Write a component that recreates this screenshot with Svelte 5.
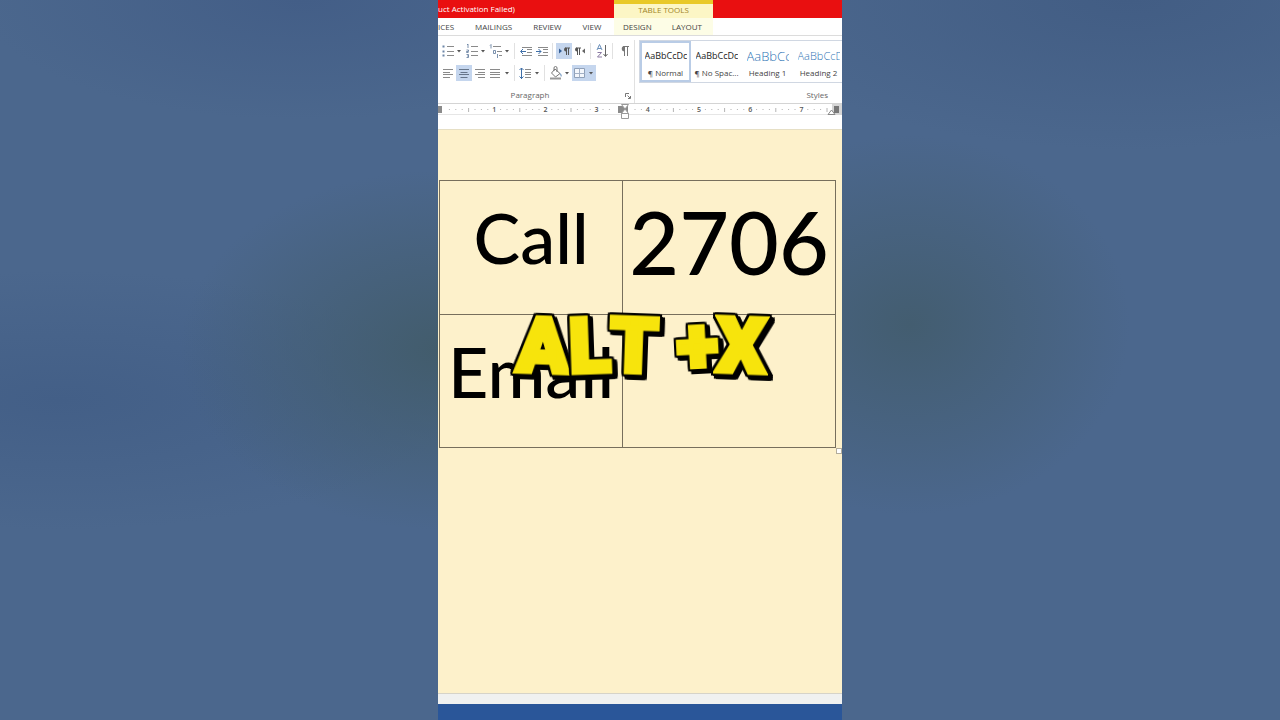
<script lang="ts">
	const tabs = ['ICES', 'MAILINGS', 'REVIEW', 'VIEW'];
	const toolTabs = ['DESIGN', 'LAYOUT'];

	type Tool = { id: string; label: string; menu?: boolean; on?: boolean };

	const rows: Tool[][][] = [
		[
			[
				{ id: 'bullets', label: 'Bullets', menu: true },
				{ id: 'numbers', label: 'Numbering', menu: true },
				{ id: 'levels', label: 'Multilevel list', menu: true }
			],
			[
				{ id: 'outdent', label: 'Decrease indent' },
				{ id: 'indent', label: 'Increase indent' }
			],
			[
				{ id: 'ltr', label: 'Left-to-right', on: true },
				{ id: 'rtl', label: 'Right-to-left' }
			],
			[{ id: 'sort', label: 'Sort' }],
			[{ id: 'marks', label: 'Show marks' }]
		],
		[
			[
				{ id: 'left', label: 'Align left' },
				{ id: 'center', label: 'Center', on: true },
				{ id: 'right', label: 'Align right' },
				{ id: 'justify', label: 'Justify', menu: true }
			],
			[{ id: 'spacing', label: 'Line spacing', menu: true }],
			[
				{ id: 'shading', label: 'Shading', menu: true },
				{ id: 'borders', label: 'Borders', menu: true, on: true }
			]
		]
	];

	const styles = [
		{ sample: 'AaBbCcDc', name: '¶ Normal', kind: 'body', on: true },
		{ sample: 'AaBbCcDc', name: '¶ No Spac...', kind: 'body', on: false },
		{ sample: 'AaBbCc', name: 'Heading 1', kind: 'h1', on: false },
		{ sample: 'AaBbCcD', name: 'Heading 2', kind: 'h2', on: false }
	];

	const caption = [
		{ char: 'A', tilt: 2 },
		{ char: 'L', tilt: -2 },
		{ char: 'T', tilt: 2 },
		{ char: ' ', tilt: 0 },
		{ char: '+', tilt: -3 },
		{ char: 'X', tilt: 2 }
	];

	const inch = 51.2;
	const inches = [1, 2, 3, 4, 5, 6, 7];
	const ticks = Array.from({ length: 62 }, (_, i) => i + 1).filter((i) => i % 8 !== 0);
</script>

<main>
	<section class="screen">
		<header class="titlebar">
			<span class="title">uct Activation Failed)</span>
			<span class="context-title">TABLE TOOLS</span>
		</header>

		<nav class="tabs">
			<div class="main-tabs">
				{#each tabs as tab}
					<a href="#{tab.toLowerCase()}">{tab}</a>
				{/each}
			</div>
			<div class="context-tabs">
				{#each toolTabs as tab}
					<a href="#{tab.toLowerCase()}">{tab}</a>
				{/each}
			</div>
		</nav>

		<div class="ribbon">
			<div class="group paragraph">
				{#each rows as row}
					<div class="tools">
						{#each row as set}
							<div class="set">
								{#each set as tool}
									<button type="button" class:on={tool.on} aria-label={tool.label}>
										<svg width="16" height="16" viewBox="0 0 16 16" fill="none" stroke="#8a8a8a">
											{#if tool.id === 'bullets'}
												<path d="M7 3.5h7M7 8.5h7M7 12.5h7" />
												<path d="M2.500 3.500h2M2.500 8.500h2M2.500 12.500h2" stroke="#6d86a8" stroke-width="2" />
											{:else if tool.id === 'numbers'}
												<path d="M7 3.500h7M7 8.500h7M7 12.500h7" />
												<path d="M3 2l1-1v4M2.500 7h2v1.500h-2v1h2M2.500 11.500h2v3h-2M3 13h1.500" stroke="#5b7699" stroke-width=".8" />
											{:else if tool.id === 'levels'}
												<path d="M5 3.500h8M9 8.500h5M11 12.500h3" />
												<path d="M2 2.500l1-1v4M5.500 7.500h2v3h-2zM9.500 11v4" stroke="#5b7699" stroke-width=".8" />
											{:else if tool.id === 'outdent' || tool.id === 'indent'}
												<path d="M4 4.500h10M9 6.500h5M9 9.500h5M4 12.500h10" />
												{#if tool.id === 'outdent'}
													<path d="M8 8.500H3M5 6L2.500 8.500 5 11" stroke="#3f6fa8" />
												{:else}
													<path d="M2 8.500h5M4.500 6L7 8.500 4.500 11" stroke="#3f6fa8" />
												{/if}
											{:else if tool.id === 'ltr'}
												<path d="M3 5.500v5l3-2.500z" fill="#345f96" stroke="none" />
												<path d="M10.500 5v7M12.500 5v7M9 5h5" stroke="#555" />
												<path d="M10 4.500a2 2 0 0 0 0 4z" fill="#555" stroke="none" />
											{:else if tool.id === 'rtl'}
												<path d="M13 5.500v5l-3-2.500z" fill="#666" stroke="none" />
												<path d="M5.500 5v7M7.500 5v7M4 5h5" stroke="#555" />
												<path d="M5 4.500a2 2 0 0 0 0 4z" fill="#555" stroke="none" />
											{:else if tool.id === 'sort'}
												<path d="M3 7l2.500-5.500L8 7M4 5.500h3" stroke="#6a8fba" />
												<path d="M3.500 9.500h4l-4 4.500h4.500" stroke="#8b7aa3" />
												<path d="M11.500 2v11M9.500 11l2 2.500 2-2.500" stroke="#666" />
											{:else if tool.id === 'marks'}
												<path d="M8.500 3v10M11.500 3v10M7 3.500h6" stroke="#777" />
												<path d="M8.500 3a2.500 2.500 0 0 0 0 5.500z" fill="#777" stroke="none" />
											{:else if tool.id === 'left'}
												<path d="M3 4.500h10M3 7.500h7M3 9.500h10M3 12.500h7" />
											{:else if tool.id === 'center'}
												<path d="M3 4.500h10M4.500 7.500h7M3 9.500h10M4.500 12.500h7" stroke="#66758a" />
											{:else if tool.id === 'right'}
												<path d="M3 4.500h10M6 7.500h7M3 9.500h10M6 12.500h7" />
											{:else if tool.id === 'justify'}
												<path d="M2 4.500h10M2 7.500h10M2 9.500h10M2 12.500h10" />
											{:else if tool.id === 'spacing'}
												<path d="M7 4.500h6M7 7.500h6M7 9.500h6M7 12.500h6" />
												<path d="M3.500 3v11M1.500 5l2-2 2 2M1.500 11.500l2 2 2-2" stroke="#3f6fa8" />
											{:else if tool.id === 'shading'}
												<path d="M7 4l5 4.500-4.500 3.500-4-4zM6 6V3a1.500 1.500 0 0 1 3 0v4" stroke="#777" />
												<path d="M12 8q2.500 2 1 4z" fill="#4978ad" stroke="none" />
												<path d="M2 13.500h11" stroke="#999" stroke-width="2" />
											{:else}
												<path d="M2.500 3.500h10v9h-10z" stroke="#8fa0b8" fill="#f4f7fc" />
												<path d="M7.500 3.500v9M2.500 8.500h10" stroke="#a3b1c6" />
											{/if}
										</svg>
										{#if tool.menu}
											<svg width="8" height="16" viewBox="0 0 8 16"><path d="M1 7h4L3 9.500z" fill="#555" /></svg>
										{/if}
									</button>
								{/each}
							</div>
						{/each}
					</div>
				{/each}
				<div class="group-label">
					<span>Paragraph</span>
					<svg class="launcher" width="6" height="6" viewBox="0 0 6 6" fill="none" stroke="#777">
						<path d="M.5 4V.5H4M2.500 2.500L5 5M5.500 3v2.500H3" />
					</svg>
				</div>
			</div>

			<div class="group styles">
				<div class="gallery">
					{#each styles as style}
						<button type="button" class="style" class:picked={style.on}>
							<span class="sample {style.kind}">{style.sample}</span>
							<span class="name">{style.name}</span>
						</button>
					{/each}
				</div>
				<div class="group-label">Styles</div>
			</div>
		</div>

		<svg class="ruler" viewBox="0 0 404 26" aria-hidden="true">
			<path d="M0 .5h404" stroke="#d4d4d4" />
			<path d="M0 11.500h404" stroke="#e6e6e6" />
			<path d="M0 3h4v7H0zM180 3h10v7h-10z" fill="#8b8b8b" />
			<path d="M394 1h10v11h-10z" fill="#d6d6d6" />
			<path d="M396 3h5v7h-5z" fill="#777" />
			{#each ticks as tick}
				{@const x = 5 + (tick * inch) / 8}
				{#if x < 176 || (x > 194 && x < 392)}
					<path d="M{x} {tick % 4 === 0 ? 5 : 6}v{tick % 4 === 0 ? 4 : 1}" stroke="#b4b4b4" />
				{/if}
			{/each}
			{#each inches as n}
				<text x={5 + n * inch} y="9">{n}</text>
			{/each}
			<path d="M183.500 1.500h7L187 6zM187 6l3.500 4.500h-7zM183.500 10.500h7v5h-7z" fill="#fff" stroke="#9a9a9a" />
			<path d="M390 11.500l3.500-4.500 3.500 4.500z" fill="#fff" stroke="#888" />
		</svg>

		<article class="page">
			<div class="sheet">
				<table>
					<tbody>
						<tr><td>Call</td><td class="number">2706</td></tr>
						<tr><td>Email</td><td></td></tr>
					</tbody>
				</table>
				<i class="handle"></i>
				<div class="caption">
					{#each caption as { char, tilt }}<span style:rotate="{tilt}deg">{char}</span>{/each}
				</div>
			</div>
		</article>

		<div class="scrollbar"></div>
		<footer></footer>
	</section>
</main>

<style>
	:global(body) {
		margin: 0;
	}

	main {
		display: flex;
		justify-content: center;
		min-height: 100vh;
		background:
			radial-gradient(ellipse 260px 180px at 440px 350px, #425c6c 0%, #435d7000 100%),
			radial-gradient(ellipse 220px 190px at 910px 325px, #435d70 0%, #435d7000 100%),
			radial-gradient(ellipse 320px 120px at 300px 0, #435e87 0%, #435e8700 100%),
			radial-gradient(ellipse 400px 150px at 1130px 0, #425d84 0%, #425d8400 100%),
			radial-gradient(ellipse 400px 130px at 60px 400px, #435f87 0%, #435f8700 100%),
			#4b678d;
		font-family: 'Open Sans', 'Noto Sans', sans-serif;
		font-size: 8px;
		color: #444;
	}

	.screen {
		display: flex;
		flex-direction: column;
		width: 56.111vh;
		min-width: 404px;
		min-height: 100vh;
		overflow: hidden;
		background: #fff;
	}

	.titlebar {
		display: flex;
		height: 18px;
		line-height: 18px;
		background: #e90f10;
		color: #fff;
	}

	.title {
		width: 176px;
		white-space: nowrap;
	}

	.context-title {
		width: 99px;
		box-sizing: border-box;
		border-top: 4px solid #e9c928;
		background: #fcf6c5;
		color: #a08428;
		line-height: 12px;
		text-align: center;
	}

	.tabs {
		display: flex;
		height: 17px;
		line-height: 18px;
		border-bottom: 1px solid #dcdcdc;
	}

	.tabs a {
		color: #444;
		text-decoration: none;
	}

	.main-tabs {
		display: flex;
		gap: 21px;
		width: 176px;
	}

	.context-tabs {
		display: flex;
		gap: 20px;
		box-sizing: border-box;
		width: 99px;
		padding-left: 9px;
		background: #fdfde6;
	}

	.ribbon {
		display: flex;
		height: 67px;
		padding-top: 4px;
		box-sizing: border-box;
	}

	.group {
		display: flex;
		flex-direction: column;
	}

	.paragraph {
		width: 197px;
		box-sizing: border-box;
		padding: 3px 0 0 2px;
		border-right: 1px solid #e1e1e1;
	}

	.tools {
		display: flex;
		height: 16px;
		margin-bottom: 6px;
	}

	.set {
		display: flex;
	}

	.set + .set {
		margin-left: 2px;
		padding-left: 3px;
		border-left: 1px solid #e1e1e1;
	}

	button {
		display: flex;
		padding: 0;
		border: 0;
		background: none;
		font: inherit;
		color: inherit;
	}

	button.on {
		background: #c5d6ee;
	}

	.group-label {
		display: flex;
		justify-content: center;
		line-height: 16px;
		color: #666;
	}

	.paragraph .group-label {
		position: relative;
		padding-right: 14px;
	}

	.launcher {
		position: absolute;
		right: 3px;
		top: 6px;
	}

	.styles {
		flex: 1;
		min-width: 0;
		padding: 0 0 0 4px;
	}

	.gallery {
		display: flex;
		height: 43px;
		margin-bottom: 4px;
		box-sizing: border-box;
		border: 1px solid #d0d7e2;
		border-right: 0;
		overflow: hidden;
	}

	.style {
		flex: 0 0 51px;
		flex-direction: column;
		align-items: center;
		box-sizing: border-box;
		padding: 3px 2px 0;
		border: 2px solid transparent;
		overflow: hidden;
	}

	.style.picked {
		border-color: #b9cce6;
	}

	.sample {
		width: 42px;
		height: 20px;
		line-height: 20px;
		font-size: 9px;
		font-weight: 500;
		text-align: left;
		white-space: nowrap;
		overflow: hidden;
		color: #222;
	}

	.sample.h1 {
		font-size: 13px;
		font-weight: 300;
		color: #2e74b5;
	}

	.sample.h2 {
		font-size: 11px;
		font-weight: 300;
		color: #2e74b5;
	}

	.name {
		line-height: 14px;
		white-space: nowrap;
	}

	.styles .group-label {
		padding: 0 14px 0 0;
		justify-content: flex-end;
	}

	.ruler {
		display: block;
		width: 100%;
		font-size: 7px;
		font-weight: 600;
		text-anchor: middle;
		fill: #555;
	}

	.page {
		flex: 1;
		padding: 50px 6px 0 1px;
		border-top: 1px solid #e6dfc5;
		background: #fdf1cb;
	}

	.sheet {
		position: relative;
	}

	table {
		width: 100%;
		border-collapse: collapse;
		table-layout: fixed;
		font-family: Lato, 'Open Sans', sans-serif;
		font-size: 70px;
		font-weight: 500;
		line-height: 80px;
		color: #000;
	}

	td {
		height: 116px;
		padding: 16px 0 0;
		border: 1px solid #776f5c;
		text-align: center;
		vertical-align: top;
	}

	td:first-child {
		width: 46%;
	}

	.number {
		font-size: 86px;
		line-height: 102px;
		padding-top: 10px;
		height: 123px;
	}

	.handle {
		position: absolute;
		right: -6px;
		bottom: -6px;
		width: 4px;
		height: 4px;
		border: 1px solid #b3ad9c;
		background: #fff;
	}

	.caption {
		position: absolute;
		top: 128px;
		left: 78px;
		font-family: Roboto, sans-serif;
		font-size: 76px;
		line-height: 76px;
		font-weight: 900;
		white-space: pre;
		color: #f7e40c;
		-webkit-text-stroke: 5px #f7e40c;
	}

	/* stacked shadows give each letter its own outline over the one before */
	.caption span {
		display: inline-block;
		filter: drop-shadow(2px 0 0 #000) drop-shadow(-2px 0 0 #000) drop-shadow(0 2px 0 #000)
			drop-shadow(0 -2px 0 #000) drop-shadow(3px 3px 0 #000);
	}

	.scrollbar {
		height: 10px;
		border-top: 1px solid #d6d3c8;
		background: #f0f1f0;
	}

	footer {
		height: 16px;
		background: #2a5699;
	}
</style>
